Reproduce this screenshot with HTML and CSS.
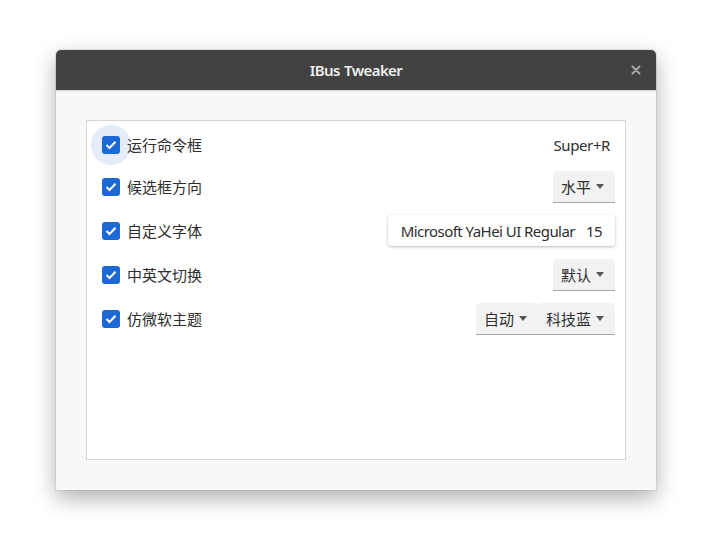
FILE: index.html
```html
<!DOCTYPE html>
<html lang="zh-CN">
<head>
<meta charset="utf-8">
<title>IBus Tweaker</title>
<link rel="stylesheet" href="styles.css">
</head>
<body>
<div class="window">
  <div class="titlebar">
    <span class="title">IBus Tweaker</span>
    <span class="close">
      <svg width="10" height="10" viewBox="0 0 10 10"><path d="M1.5 1.5 L8.5 8.5 M8.5 1.5 L1.5 8.5" stroke="#a8a8a8" stroke-width="2" stroke-linecap="round"/></svg>
    </span>
  </div>
  <div class="content">
    <div class="frame">
      <div class="row first">
        <label class="check"><span class="boxwrap focus"><span class="box"><svg width="12" height="10" viewBox="0 0 12 10"><path d="M1.5 5 L4.5 8 L10.5 1.8" fill="none" stroke="#fff" stroke-width="2"/></svg></span></span><span class="label">运行命令框</span></label>
        <span class="accel">Super+R</span>
      </div>
      <div class="row">
        <label class="check"><span class="boxwrap"><span class="box"><svg width="12" height="10" viewBox="0 0 12 10"><path d="M1.5 5 L4.5 8 L10.5 1.8" fill="none" stroke="#fff" stroke-width="2"/></svg></span></span><span class="label">候选框方向</span></label>
        <div class="combos"><span class="combo">水平<i class="arrow"></i></span></div>
      </div>
      <div class="row">
        <label class="check"><span class="boxwrap"><span class="box"><svg width="12" height="10" viewBox="0 0 12 10"><path d="M1.5 5 L4.5 8 L10.5 1.8" fill="none" stroke="#fff" stroke-width="2"/></svg></span></span><span class="label">自定义字体</span></label>
        <span class="fontbtn"><span>Microsoft YaHei UI Regular</span><span>15</span></span>
      </div>
      <div class="row">
        <label class="check"><span class="boxwrap"><span class="box"><svg width="12" height="10" viewBox="0 0 12 10"><path d="M1.5 5 L4.5 8 L10.5 1.8" fill="none" stroke="#fff" stroke-width="2"/></svg></span></span><span class="label">中英文切换</span></label>
        <div class="combos"><span class="combo">默认<i class="arrow"></i></span></div>
      </div>
      <div class="row">
        <label class="check"><span class="boxwrap"><span class="box"><svg width="12" height="10" viewBox="0 0 12 10"><path d="M1.5 5 L4.5 8 L10.5 1.8" fill="none" stroke="#fff" stroke-width="2"/></svg></span></span><span class="label">仿微软主题</span></label>
        <div class="combos"><span class="combo">自动<i class="arrow"></i></span><span class="combo">科技蓝<i class="arrow"></i></span></div>
      </div>
    </div>
  </div>
</div>
</body>
</html>
```
FILE: styles.css
```css
html, body {
  margin: 0;
  padding: 0;
  background: #ffffff;
}
body {
  font-family: "Noto Sans", "Noto Sans CJK SC", sans-serif;
  color: #2e3436;
  padding: 50px 0 0 56px;
  height: 552px;
  box-sizing: border-box;
}
.window {
  width: 600px;
  height: 440px;
  border-radius: 5px 5px 0 0;
  background: #f8f8f8;
  box-shadow: 0 8px 22px rgba(0, 0, 0, 0.32), 0 0 0 1px rgba(0, 0, 0, 0.06);
  display: flex;
  flex-direction: column;
}
.titlebar {
  height: 40px;
  background: #424242;
  border-radius: 5px 5px 0 0;
  display: flex;
  align-items: center;
  justify-content: center;
  position: relative;
  box-shadow: 0 1px 2px rgba(0,0,0,0.15);
}
.title {
  color: #eeeeee;
  font-family: "Noto Sans", sans-serif;
  font-size: 15px;
  font-weight: 600;
  letter-spacing: -0.6px;
  word-spacing: 1px;
}
.close {
  position: absolute;
  right: 15px;
  top: 15px;
  width: 10px;
  height: 10px;
  display: flex;
}
.content {
  flex: 1;
  padding: 30px;
  display: flex;
}
.frame {
  flex: 1;
  background: #ffffff;
  border: 1px solid #d6d6d6;
  padding: 3px 10px 0 15px;
  display: flex;
  flex-direction: column;
}
.row {
  height: 44px;
  flex: none;
  display: flex;
  align-items: center;
  justify-content: space-between;
}
.row.first {
  height: 41px;
}
.check {
  display: flex;
  align-items: center;
  gap: 7px;
  font-family: "Noto Sans CJK SC", sans-serif;
  font-size: 15px;
  color: #2e2e2e;
}
.boxwrap {
  width: 18px;
  height: 18px;
  flex: none;
  position: relative;
  display: block;
}
.focus::before {
  content: "";
  position: absolute;
  left: -11px;
  top: -11px;
  width: 40px;
  height: 40px;
  border-radius: 50%;
  background: #e4ecf8;
}
.box {
  position: relative;
  width: 18px;
  height: 18px;
  border-radius: 3px;
  background: #1c68d4;
  display: flex;
  align-items: center;
  justify-content: center;
}
.label {
  position: relative;
  line-height: 20px;
}
.accel {
  font-size: 15px;
  color: #2e2e2e;
  margin-right: 5px;
  letter-spacing: -0.4px;
}
.combos {
  display: flex;
}
.combo {
  height: 31px;
  display: flex;
  align-items: center;
  padding: 0 11px 0 8px;
  background: #f2f2f2;
  border-bottom: 1px solid #a6a6a6;
  border-radius: 4px 4px 0 0;
  font-family: "Noto Sans CJK SC", sans-serif;
  font-size: 15px;
  color: #2e2e2e;
}
.arrow {
  display: inline-block;
  width: 0;
  height: 0;
  border-left: 4.5px solid transparent;
  border-right: 4.5px solid transparent;
  border-top: 5px solid #555;
  margin-left: 5px;
}
.fontbtn {
  height: 31px;
  display: flex;
  align-items: center;
  gap: 11px;
  padding: 0 13px;
  background: #ffffff;
  border-radius: 4px;
  box-shadow: 0 1px 3px rgba(0,0,0,0.28);
  font-size: 15px;
  color: #2e2e2e;
  letter-spacing: -0.55px;
  margin-top: -1px;
}
```
